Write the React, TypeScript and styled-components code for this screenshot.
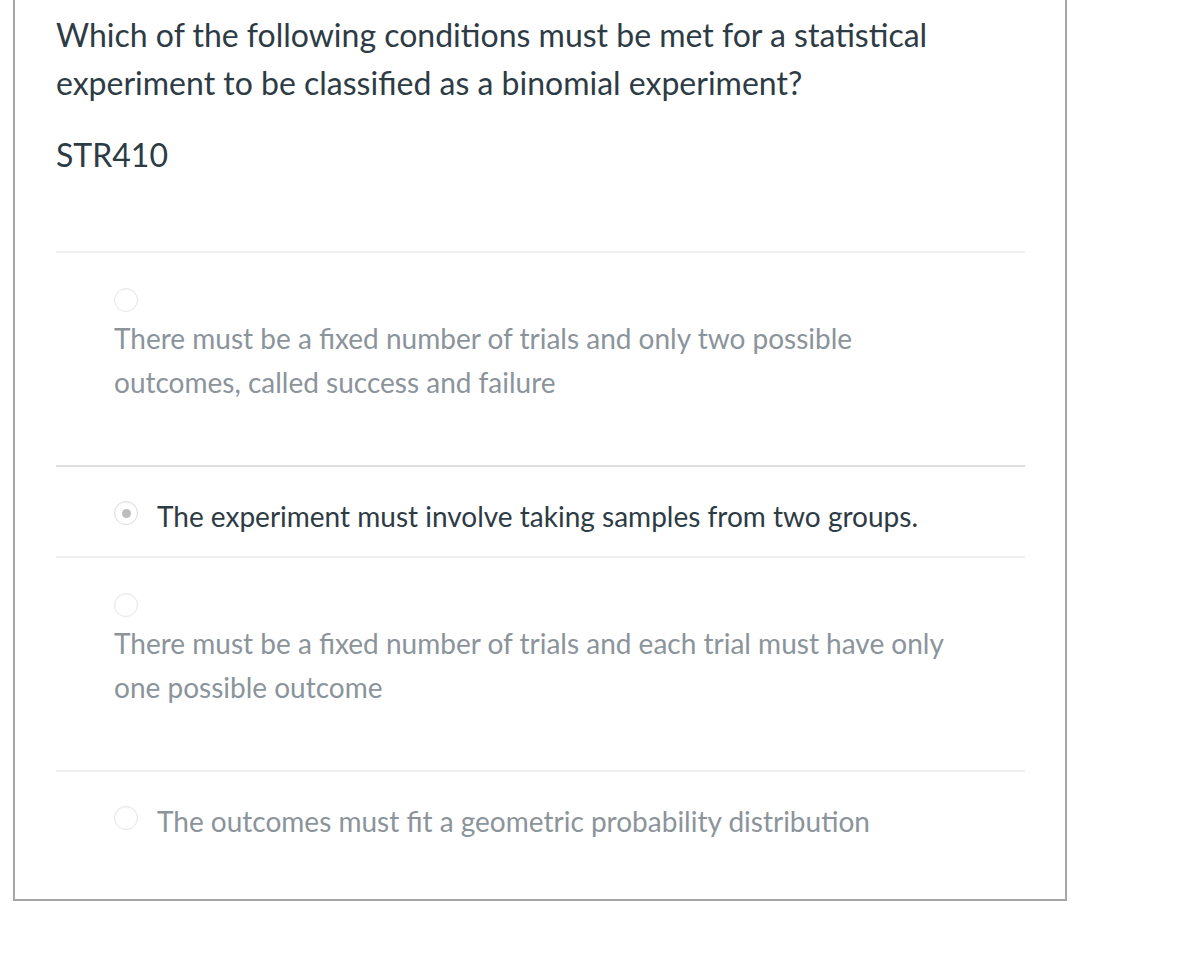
import styled, { createGlobalStyle } from "styled-components";

const GlobalStyle = createGlobalStyle`
  html, body {
    margin: 0;
    padding: 0;
    background: #fff;
  }
  body {
    font-family: Lato, "Open Sans", "Liberation Sans", sans-serif;
  }
`;

const Page = styled.div`
  width: 1198px;
  min-height: 956px;
  padding-left: 13px;
  box-sizing: border-box;
`;

const Card = styled.div`
  width: 1054px;
  box-sizing: border-box;
  border: 2px solid #a6a6a6;
  border-top: none;
  padding: 11px 40px 38px 41px;
`;

const QuestionText = styled.p`
  margin: 0 0 24px;
  color: #2d3b45;
  font-size: 32px;
  line-height: 48px;
`;

const Answers = styled.div`
  margin-top: 72px;
  border-top: 2px solid #efefef;
`;

const AnswerItem = styled.div<{ $dark?: boolean; $inline?: boolean }>`
  padding: ${(p) => (p.$inline ? "27px 0 18px 58px" : "30px 0 15px 58px")};
  border-bottom: 2px solid ${(p) => (p.$dark ? "#dedede" : "#efefef")};

  &:last-child {
    border-bottom: none;
  }
`;

const InlineRow = styled.label`
  display: flex;
  align-items: center;
  gap: 19px;
  height: 44px;
`;

const RadioRow = styled.div`
  display: flex;
  align-items: center;
  height: 33px;
`;

const Radio = styled.span<{ $checked?: boolean; $lift?: boolean }>`
  position: relative;
  flex: none;
  width: 22px;
  height: 22px;
  border-radius: 50%;
  border: 1px solid ${(p) => (p.$checked ? "#dcdcdc" : "#e6e6e6")};
  background: #fff;
  box-shadow: inset 0 1px 2px rgba(0, 0, 0, 0.04);
  margin-top: ${(p) => (p.$lift ? "-6px" : "0")};

  &::after {
    content: "";
    display: ${(p) => (p.$checked ? "block" : "none")};
    position: absolute;
    left: 50%;
    top: 50%;
    width: 9px;
    height: 9px;
    margin: -4.5px 0 0 -4.5px;
    border-radius: 50%;
    background: #bdbdbd;
  }
`;

const AnswerText = styled.div<{ $selected?: boolean; $block?: boolean }>`
  color: ${(p) => (p.$selected ? "#2d3b45" : "#8b949b")};
  font-size: 28px;
  line-height: 44px;
  margin-bottom: ${(p) => (p.$block ? "46px" : "0")};
  max-width: 850px;
`;

const answers = [
  {
    text: "There must be a fixed number of trials and only two possible outcomes, called success and failure",
    block: true,
    selected: false,
  },
  {
    text: "The experiment must involve taking samples from two groups.",
    block: false,
    selected: true,
  },
  {
    text: "There must be a fixed number of trials and each trial must have only one possible outcome",
    block: true,
    selected: false,
  },
  {
    text: "The outcomes must fit a geometric probability distribution",
    block: false,
    selected: false,
  },
];

export default function App() {
  return (
    <>
      <GlobalStyle />
      <Page>
        <Card>
          <QuestionText>
            Which of the following conditions must be met for a statistical
            experiment to be classified as a binomial experiment?
          </QuestionText>
          <QuestionText>STR410</QuestionText>
          <Answers>
            {answers.map((a, i) => (
              <AnswerItem key={i} $dark={i === 0} $inline={!a.block}>
                {a.block ? (
                  <>
                    <RadioRow>
                      <Radio />
                    </RadioRow>
                    <AnswerText $block>{a.text}</AnswerText>
                  </>
                ) : (
                  <InlineRow>
                    <Radio $checked={a.selected} $lift />
                    <AnswerText $selected={a.selected}>{a.text}</AnswerText>
                  </InlineRow>
                )}
              </AnswerItem>
            ))}
          </Answers>
        </Card>
      </Page>
    </>
  );
}
